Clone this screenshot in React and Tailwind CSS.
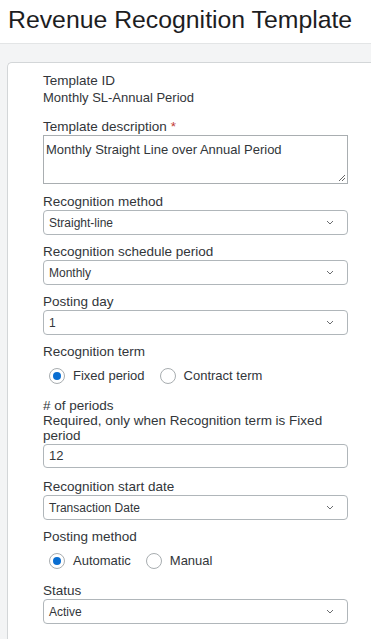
import React from 'react';

const font = { fontFamily: '"Liberation Sans", Arial, sans-serif' };

function Label({ children, required }) {
  return (
    <div className="text-[13.5px] leading-[15px] text-[#32363a]">
      {children}
      {required && <span className="text-[#c23934] ml-1">*</span>}
    </div>
  );
}

function Chevron() {
  return (
    <svg width="8" height="5" viewBox="0 0 8 5" className="text-[#6b6d70]">
      <path d="M1 1l3 3 3-3" fill="none" stroke="currentColor" strokeWidth="1" />
    </svg>
  );
}

function Select({ value }) {
  return (
    <div className="mt-px h-[25px] border border-[#b0b6ba] rounded-[4px] bg-white flex items-center justify-between pl-[5px] pr-[13px]">
      <span className="text-[12px] text-[#32363a]">{value}</span>
      <Chevron />
    </div>
  );
}

function Field({ label, value, required, className = 'mb-[9px]' }) {
  return (
    <div className={className}>
      <Label required={required}>{label}</Label>
      <Select value={value} />
    </div>
  );
}

function Radio({ checked, label }) {
  return (
    <label className="flex items-center gap-[8px]">
      <span className="w-[16px] h-[16px] rounded-full border border-[#a8adb0] bg-white flex items-center justify-center">
        {checked && <span className="w-[8px] h-[8px] rounded-full bg-[#0a6ed1]" />}
      </span>
      <span className="text-[13px] text-[#32363a]">{label}</span>
    </label>
  );
}

function RadioGroup({ label, options }) {
  return (
    <div className="mb-[7px]">
      <Label>{label}</Label>
      <div className="mt-[2px] h-[30px] flex items-center gap-[15px] pl-[6px]">
        {options.map((o) => (
          <Radio key={o.label} checked={o.checked} label={o.label} />
        ))}
      </div>
    </div>
  );
}

export default function App() {
  return (
    <div className="min-h-screen bg-[#f3f4f5] overflow-hidden" style={font}>
      <div className="h-[44px] bg-white border-b border-[#e3e5e6] pl-[8px] pt-[5px]">
        <h1 className="text-[24.8px] leading-[30px] text-[#1d1d1f]">Revenue Recognition Template</h1>
      </div>
      <div className="pt-[18px] pl-[7px]">
        <div className="bg-white border border-[#d3d6d8] border-r-0 rounded-tl-[5px] pl-[35px] pr-[23px] pt-[10px] min-h-[600px]">
          <div className="mb-[14px]">
            <Label>Template ID</Label>
            <div className="mt-[2px] text-[13px] leading-[15px] text-[#32363a]">Monthly SL-Annual Period</div>
          </div>
          <div className="mb-[10px]">
            <Label required>Template description</Label>
            <div className="mt-px h-[49px] border border-[#a9aeb1] bg-white relative px-[2px] pt-[1px]">
              <span className="text-[13px] text-[#32363a]">Monthly Straight Line over Annual Period</span>
              <svg width="8" height="8" viewBox="0 0 8 8" className="absolute right-[1px] bottom-[1px]">
                <path d="M7 1L1 7M7 4L4 7" stroke="#666" strokeWidth="1" />
              </svg>
            </div>
          </div>
          <Field label="Recognition method" value="Straight-line" />
          <Field label="Recognition schedule period" value="Monthly" />
          <Field label="Posting day" value="1" />
          <RadioGroup
            label="Recognition term"
            options={[
              { label: 'Fixed period', checked: true },
              { label: 'Contract term', checked: false },
            ]}
          />
          <div className="mb-[11px]">
            <Label>
              # of periods
              <br />
              Required, only when Recognition term is Fixed period
            </Label>
            <div className="mt-px h-[24px] border border-[#b0b6ba] rounded-[4px] bg-white flex items-center pl-[5px]">
              <span className="text-[13px] text-[#32363a]">12</span>
            </div>
          </div>
          <Field label="Recognition start date" value="Transaction Date" />
          <RadioGroup
            label="Posting method"
            options={[
              { label: 'Automatic', checked: true },
              { label: 'Manual', checked: false },
            ]}
          />
          <Field label="Status" value="Active" />
        </div>
      </div>
    </div>
  );
}
